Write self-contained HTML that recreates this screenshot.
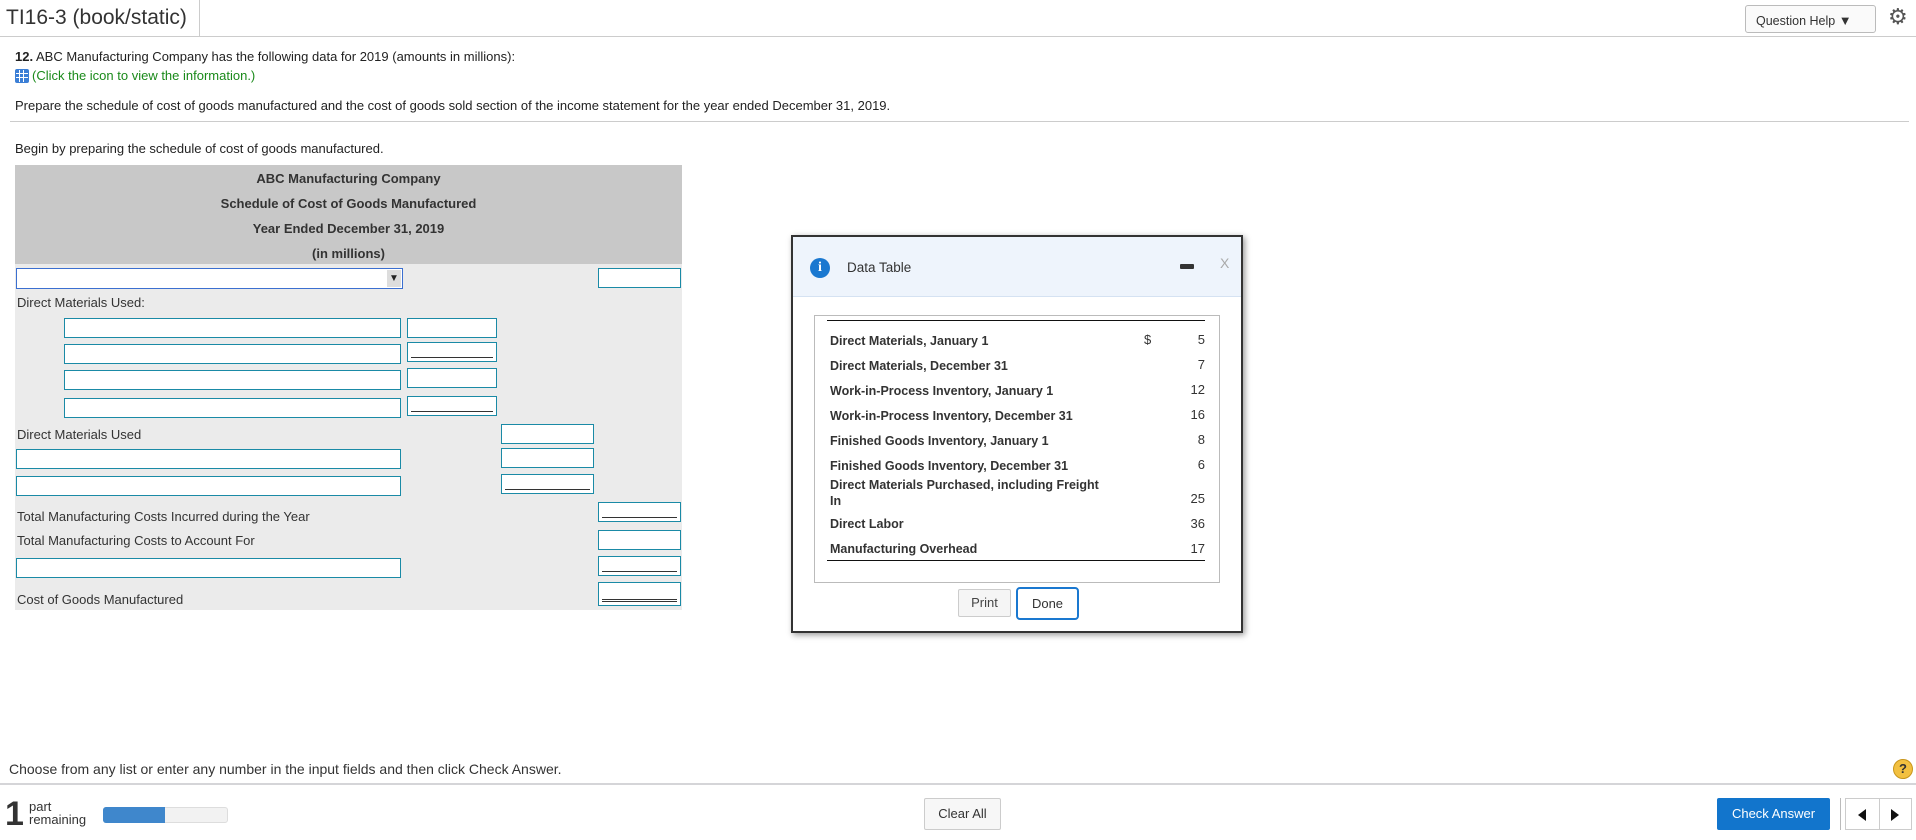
<!DOCTYPE html>
<html><head><meta charset="utf-8"><style>
*{box-sizing:border-box}
body{margin:0;width:1916px;height:840px;position:relative;background:#fff;font-family:"Liberation Sans",Arial,sans-serif;color:#222;font-size:13px;overflow:hidden}
.a{position:absolute;white-space:nowrap}
.in{position:absolute;height:20px;border:1px solid #1a8aa6;background:#fff}
.sgl::after{content:"";position:absolute;left:3px;right:3px;bottom:3px;border-bottom:1px solid #333}
.g{color:#333}
.row{position:absolute;left:830px;font-weight:bold;color:#333;font-size:12.5px}
</style></head><body>
<div class="a" style="left:6px;top:6px;font-size:21px;color:#333">TI16-3 (book/static)</div>
<div class="a" style="left:199px;top:0;width:1px;height:37px;background:#ccc"></div>
<div class="a" style="left:0;top:36px;width:1916px;height:1px;background:#ccc"></div>
<div class="a" style="left:1745px;top:5px;width:131px;height:28px;border:1px solid #bbb;border-radius:3px;background:#fafafa;font-size:12.5px;padding:7px 0 0 10px;color:#333">Question Help <span style="font-size:13px">&#9660;</span></div>
<div class="a" style="left:1888px;top:4px;font-size:22px;color:#555">&#9881;</div>

<div class="a" style="left:15px;top:49px"><b>12.</b> ABC Manufacturing Company has the following data for 2019 (amounts in millions):</div>
<div class="a" style="left:15px;top:69px;width:14px;height:14px;background:#3c7fd6;border-radius:2px;background-image:linear-gradient(#fff 0 0),linear-gradient(#fff 0 0),linear-gradient(#fff 0 0),linear-gradient(#fff 0 0);background-size:12px 1px,12px 1px,1px 12px,1px 12px;background-position:1px 4px,1px 8px,4px 1px,8px 1px;background-repeat:no-repeat"></div>
<div class="a" style="left:32px;top:68px;color:#1a8a1a">(Click the icon to view the information.)</div>
<div class="a" style="left:15px;top:98px">Prepare the schedule of cost of goods manufactured and the cost of goods sold section of the income statement for the year ended December 31, 2019.</div>
<div class="a" style="left:10px;top:121px;width:1899px;height:1px;background:#ccc"></div>
<div class="a" style="left:15px;top:141px">Begin by preparing the schedule of cost of goods manufactured.</div>

<div class="a" style="left:15px;top:165px;width:667px;height:99px;background:#c8c8c8"></div>
<div class="a" style="left:15px;top:264px;width:667px;height:346px;background:#ebebeb"></div>
<div class="a g" style="left:15px;width:667px;text-align:center;top:171px;font-weight:bold">ABC Manufacturing Company</div>
<div class="a g" style="left:15px;width:667px;text-align:center;top:196px;font-weight:bold">Schedule of Cost of Goods Manufactured</div>
<div class="a g" style="left:15px;width:667px;text-align:center;top:221px;font-weight:bold">Year Ended December 31, 2019</div>
<div class="a g" style="left:15px;width:667px;text-align:center;top:246px;font-weight:bold">(in millions)</div>

<div class="a" style="left:16px;top:268px;width:387px;height:21px;border:1px solid #3b6fd0;background:#fff"><div style="position:absolute;right:1px;top:1px;width:14px;height:17px;background:#ddd;font-size:10px;text-align:center;line-height:17px">&#9660;</div></div>
<div class="in" style="left:598px;top:268px;width:83px"></div>
<div class="a g" style="left:17px;top:295px">Direct Materials Used:</div>
<div class="in" style="left:64px;top:318px;width:337px"></div><div class="in" style="left:407px;top:318px;width:90px"></div>
<div class="in" style="left:64px;top:344px;width:337px"></div><div class="in sgl" style="left:407px;top:342px;width:90px"></div>
<div class="in" style="left:64px;top:370px;width:337px"></div><div class="in" style="left:407px;top:368px;width:90px"></div>
<div class="in" style="left:64px;top:398px;width:337px"></div><div class="in sgl" style="left:407px;top:396px;width:90px"></div>
<div class="a g" style="left:17px;top:427px">Direct Materials Used</div>
<div class="in" style="left:501px;top:424px;width:93px"></div>
<div class="in" style="left:16px;top:449px;width:385px"></div><div class="in" style="left:501px;top:448px;width:93px"></div>
<div class="in" style="left:16px;top:476px;width:385px"></div><div class="in sgl" style="left:501px;top:474px;width:93px"></div>
<div class="a g" style="left:17px;top:509px">Total Manufacturing Costs Incurred during the Year</div>
<div class="in sgl" style="left:598px;top:502px;width:83px"></div>
<div class="a g" style="left:17px;top:533px">Total Manufacturing Costs to Account For</div>
<div class="in" style="left:598px;top:530px;width:83px"></div>
<div class="in" style="left:16px;top:558px;width:385px"></div><div class="in sgl" style="left:598px;top:556px;width:83px"></div>
<div class="a g" style="left:17px;top:592px">Cost of Goods Manufactured</div>
<div class="in" style="left:598px;top:582px;width:83px;height:24px"><div style="position:absolute;left:3px;right:3px;bottom:3px;border-bottom:3px double #333"></div></div>

<div class="a" style="left:791px;top:235px;width:452px;height:398px;border:2px solid #333;background:#fff;box-shadow:2px 2px 6px rgba(0,0,0,.4)">
 <div style="position:absolute;left:0;top:0;right:0;height:60px;background:#eef4fc;border-bottom:1px solid #d5e2f2"></div>
 <div style="position:absolute;left:17px;top:21px;width:20px;height:20px;border-radius:50%;background:#1a78d0;color:#fff;font:bold 14px 'Liberation Serif',serif;text-align:center;line-height:20px">i</div>
 <div style="position:absolute;left:54px;top:23px;font-size:13.5px;color:#333">Data Table</div>
 <div style="position:absolute;left:387px;top:27px;width:14px;height:5px;background:#333;border-radius:1px"></div>
 <div style="position:absolute;left:427px;top:18px;font-size:14px;color:#aaa">X</div>
 <div style="position:absolute;left:21px;top:78px;width:406px;height:268px;border:1px solid #bbb"></div>
 <div style="position:absolute;left:34px;top:83px;width:378px;height:1px;background:#111"></div>
 <div style="position:absolute;left:34px;top:323px;width:378px;height:1px;background:#111"></div>
</div>
<div class="row" style="top:334px">Direct Materials, January 1</div><div class="a g" style="left:1144px;top:332px">$</div><div class="a g" style="left:1180px;width:25px;text-align:right;top:332px">5</div>
<div class="row" style="top:359px">Direct Materials, December 31</div><div class="a g" style="left:1180px;width:25px;text-align:right;top:357px">7</div>
<div class="row" style="top:384px">Work-in-Process Inventory, January 1</div><div class="a g" style="left:1180px;width:25px;text-align:right;top:382px">12</div>
<div class="row" style="top:409px">Work-in-Process Inventory, December 31</div><div class="a g" style="left:1180px;width:25px;text-align:right;top:407px">16</div>
<div class="row" style="top:434px">Finished Goods Inventory, January 1</div><div class="a g" style="left:1180px;width:25px;text-align:right;top:432px">8</div>
<div class="row" style="top:459px">Finished Goods Inventory, December 31</div><div class="a g" style="left:1180px;width:25px;text-align:right;top:457px">6</div>
<div class="row" style="top:477px;line-height:16px">Direct Materials Purchased, including Freight<br>In</div><div class="a g" style="left:1180px;width:25px;text-align:right;top:491px">25</div>
<div class="row" style="top:517px">Direct Labor</div><div class="a g" style="left:1180px;width:25px;text-align:right;top:516px">36</div>
<div class="row" style="top:542px">Manufacturing Overhead</div><div class="a g" style="left:1180px;width:25px;text-align:right;top:541px">17</div>
<div class="a" style="left:958px;top:589px;width:53px;height:28px;border:1px solid #ccc;border-radius:2px;background:#f5f5f5;text-align:center;line-height:26px;font-size:13px;color:#444">Print</div>
<div class="a" style="left:1016px;top:587px;width:63px;height:33px;border:2px solid #1a78d0;border-radius:4px;background:#fff;text-align:center;line-height:29px;font-size:13px;color:#333">Done</div>

<div class="a" style="left:9px;top:761px;color:#333;font-size:14px">Choose from any list or enter any number in the input fields and then click Check Answer.</div>
<div class="a" style="left:1893px;top:759px;width:20px;height:20px;border-radius:50%;background:#f2c040;border:1px solid #c8951a;text-align:center;font-weight:bold;font-size:13px;line-height:18px;color:#333">?</div>
<div class="a" style="left:0;top:783px;width:1916px;height:2px;background:#d5d5d8"></div>
<div class="a" style="left:5px;top:796px;font-size:34px;font-weight:bold;color:#333;line-height:36px">1</div>
<div class="a" style="left:29px;top:800px;font-size:13px;line-height:13px;color:#333">part<br>remaining</div>
<div class="a" style="left:103px;top:807px;width:125px;height:16px;border-radius:3px;background:#f2f2f2;border:1px solid #ddd"></div>
<div class="a" style="left:103px;top:807px;width:62px;height:16px;border-radius:3px 0 0 3px;background:#3f87cc"></div>
<div class="a" style="left:924px;top:798px;width:77px;height:32px;border:1px solid #ccc;border-radius:2px;background:#f7f7f7;text-align:center;line-height:30px;font-size:13px;color:#333">Clear All</div>
<div class="a" style="left:1717px;top:798px;width:113px;height:32px;border-radius:2px;background:#1275cc;color:#fff;text-align:center;line-height:32px;font-size:13px">Check Answer</div>
<div class="a" style="left:1840px;top:798px;width:1px;height:32px;background:#bbb"></div>
<div class="a" style="left:1845px;top:798px;width:67px;height:32px;border:1px solid #ccc;background:#fff"><div style="position:absolute;left:33px;top:0;width:1px;height:30px;background:#ccc"></div><div style="position:absolute;left:12px;top:10px;border:6px solid transparent;border-right:8px solid #111;border-left:0"></div><div style="position:absolute;left:45px;top:10px;border:6px solid transparent;border-left:8px solid #111;border-right:0"></div></div>
</body></html>
